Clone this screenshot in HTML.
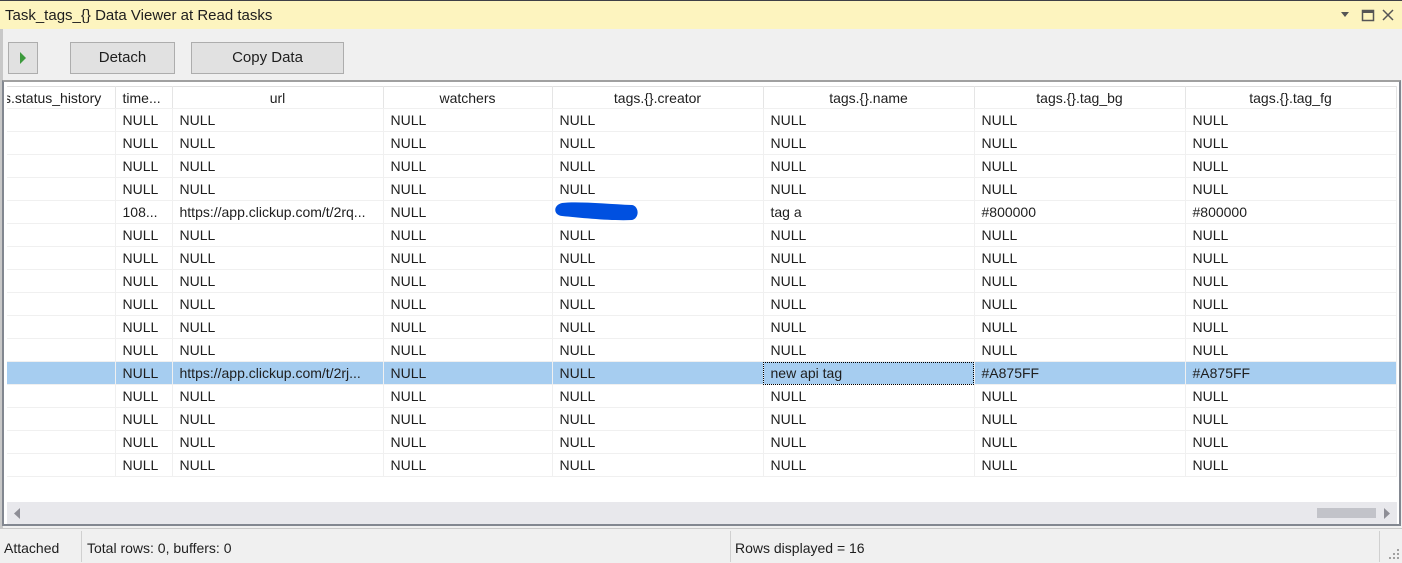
<!DOCTYPE html>
<html><head><style>
*{margin:0;padding:0;box-sizing:border-box}
body{width:1402px;height:563px;overflow:hidden;background:#f0f0f0;font-family:"Liberation Sans",sans-serif;font-size:14px;color:#1e1e1e;position:relative}
.a{position:absolute}
#title{left:0;top:0;width:1402px;height:29px;background:#fdf4bf;border-top:1px solid #3f3f46;}
#title span{position:absolute;left:5px;top:6px;font-size:15px;color:#1e1e1e}
.btn{background:#e1e1e1;border:1px solid #adadad;text-align:center;line-height:30px;font-size:15px}
#grid{left:2px;top:80px;width:1399px;height:446px;border:2px solid #828790;border-top:2px solid #a0a0a0;background:#fff}
table{position:absolute;left:3px;top:4px;border-collapse:collapse;table-layout:fixed;width:1389px}
td,th{height:23px;border-right:1px solid #f0f0f0;border-bottom:1px solid #f0f0f0;padding:0 0 0 7px;white-space:nowrap;overflow:hidden;font-weight:normal;text-align:left}
th{text-align:center;padding:0;border-right:1px solid #e5e5e5;border-top:1px solid #e0e0e0;height:22px}
tr.sel td{background:#a6cdf0}
#hs{left:3px;top:420px;width:1390px;height:22px;background:#e8e8ec}
#status{left:0;top:528px;width:1402px;height:35px;border-top:1px solid #c8c8c8}
</style></head><body>
<div id="title" class="a"><span>Task_tags_{} Data Viewer at Read tasks</span>
<svg class="a" style="left:1338px;top:5px" width="60" height="20"><path d="M3 6h8l-4 5z" fill="#555"/><rect x="24.5" y="4.5" width="11" height="10" fill="none" stroke="#555" stroke-width="1.5"/><rect x="24" y="4" width="12" height="3" fill="#555"/><path d="M45 4l10 10M55 4l-10 10" stroke="#555" stroke-width="1.5"/></svg>
</div>
<div class="a" style="left:0;top:29px;width:3px;height:500px;background:#c8c8c8"></div>
<div class="a btn" style="left:8px;top:42px;width:30px;height:32px"><svg width="28" height="30"><path d="M11 9l6 6-6 6z" fill="#3c9a3c"/></svg></div>
<div class="a btn" style="left:70px;top:42px;width:105px;height:32px">Detach</div>
<div class="a btn" style="left:191px;top:42px;width:153px;height:32px">Copy Data</div>
<div id="grid" class="a">
<table>
<colgroup><col style="width:108px"><col style="width:57px"><col style="width:211px"><col style="width:169px"><col style="width:211px"><col style="width:211px"><col style="width:211px"><col style="width:211px"></colgroup>
<tr><th style="text-align:left;padding-left:0;text-indent:-3px">s.status_history</th><th style="text-align:left;padding-left:7px">time...</th><th>url</th><th>watchers</th><th>tags.{}.creator</th><th>tags.{}.name</th><th>tags.{}.tag_bg</th><th>tags.{}.tag_fg</th></tr>
<tr><td></td><td>NULL</td><td>NULL</td><td>NULL</td><td>NULL</td><td>NULL</td><td>NULL</td><td>NULL</td></tr>
<tr><td></td><td>NULL</td><td>NULL</td><td>NULL</td><td>NULL</td><td>NULL</td><td>NULL</td><td>NULL</td></tr>
<tr><td></td><td>NULL</td><td>NULL</td><td>NULL</td><td>NULL</td><td>NULL</td><td>NULL</td><td>NULL</td></tr>
<tr><td></td><td>NULL</td><td>NULL</td><td>NULL</td><td>NULL</td><td>NULL</td><td>NULL</td><td>NULL</td></tr>
<tr><td></td><td>108...</td><td>https://app.clickup.com/t/2rq...</td><td>NULL</td><td></td><td>tag a</td><td>#800000</td><td>#800000</td></tr>
<tr><td></td><td>NULL</td><td>NULL</td><td>NULL</td><td>NULL</td><td>NULL</td><td>NULL</td><td>NULL</td></tr>
<tr><td></td><td>NULL</td><td>NULL</td><td>NULL</td><td>NULL</td><td>NULL</td><td>NULL</td><td>NULL</td></tr>
<tr><td></td><td>NULL</td><td>NULL</td><td>NULL</td><td>NULL</td><td>NULL</td><td>NULL</td><td>NULL</td></tr>
<tr><td></td><td>NULL</td><td>NULL</td><td>NULL</td><td>NULL</td><td>NULL</td><td>NULL</td><td>NULL</td></tr>
<tr><td></td><td>NULL</td><td>NULL</td><td>NULL</td><td>NULL</td><td>NULL</td><td>NULL</td><td>NULL</td></tr>
<tr><td></td><td>NULL</td><td>NULL</td><td>NULL</td><td>NULL</td><td>NULL</td><td>NULL</td><td>NULL</td></tr>
<tr class="sel"><td></td><td>NULL</td><td>https://app.clickup.com/t/2rj...</td><td>NULL</td><td>NULL</td><td style="outline:1px dotted #000;outline-offset:-1px">new api tag</td><td>#A875FF</td><td>#A875FF</td></tr>
<tr><td></td><td>NULL</td><td>NULL</td><td>NULL</td><td>NULL</td><td>NULL</td><td>NULL</td><td>NULL</td></tr>
<tr><td></td><td>NULL</td><td>NULL</td><td>NULL</td><td>NULL</td><td>NULL</td><td>NULL</td><td>NULL</td></tr>
<tr><td></td><td>NULL</td><td>NULL</td><td>NULL</td><td>NULL</td><td>NULL</td><td>NULL</td><td>NULL</td></tr>
<tr><td></td><td>NULL</td><td>NULL</td><td>NULL</td><td>NULL</td><td>NULL</td><td>NULL</td><td>NULL</td></tr>
</table>
<div id="hs" class="a">
<svg class="a" style="left:6px;top:6px" width="8" height="11"><path d="M7 0v11L1 5.5z" fill="#8e8e96"/></svg>
<div class="a" style="left:1310px;top:6px;width:59px;height:10px;background:#c2c3c9"></div>
<svg class="a" style="left:1376px;top:6px" width="8" height="11"><path d="M1 0v11l6-5.5z" fill="#8e8e96"/></svg>
</div>
</div>
<svg class="a" style="left:552px;top:200px" width="88" height="26"><path d="M10 3C25 1 55 4 80 5c7 1 8 13 0 15C60 21 30 18 10 16 1 15 1 5 10 3z" fill="#0050e0"/></svg>
<div id="status" class="a">
<span class="a" style="left:4px;top:11px">Attached</span>
<div class="a" style="left:81px;top:2px;width:1px;height:31px;background:#d0d0d0"></div>
<span class="a" style="left:87px;top:11px">Total rows: 0, buffers: 0</span>
<div class="a" style="left:730px;top:2px;width:1px;height:31px;background:#d0d0d0"></div>
<span class="a" style="left:735px;top:11px">Rows displayed = 16</span>
<div class="a" style="left:1379px;top:2px;width:1px;height:31px;background:#d0d0d0"></div>
<svg class="a" style="left:1387px;top:20px" width="14" height="14"><g fill="#a0a0a0"><rect x="10" y="0" width="2" height="2"/><rect x="6" y="4" width="2" height="2"/><rect x="10" y="4" width="2" height="2"/><rect x="2" y="8" width="2" height="2"/><rect x="6" y="8" width="2" height="2"/><rect x="10" y="8" width="2" height="2"/></g></svg>
</div>
</body></html>
